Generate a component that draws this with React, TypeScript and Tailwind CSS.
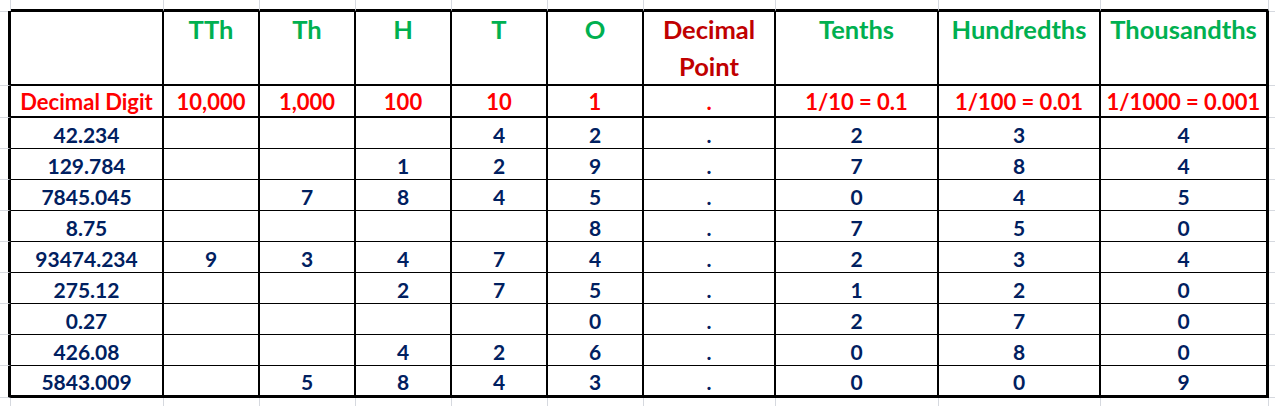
import React from 'react';

// place value chart, laid out like the spreadsheet it came from
const headers = ['TTh', 'Th', 'H', 'T', 'O'];
const values = ['10,000', '1,000', '100', '10', '1'];
const fractions = ['Tenths', 'Hundredths', 'Thousandths'];
const fractionValues = ['1/10 = 0.1', '1/100 = 0.01', '1/1000 = 0.001'];

const rows: string[][] = [
  ['42.234', '', '', '', '4', '2', '.', '2', '3', '4'],
  ['129.784', '', '', '1', '2', '9', '.', '7', '8', '4'],
  ['7845.045', '', '7', '8', '4', '5', '.', '0', '4', '5'],
  ['8.75', '', '', '', '', '8', '.', '7', '5', '0'],
  ['93474.234', '9', '3', '4', '7', '4', '.', '2', '3', '4'],
  ['275.12', '', '', '2', '7', '5', '.', '1', '2', '0'],
  ['0.27', '', '', '', '', '0', '.', '2', '7', '0'],
  ['426.08', '', '', '4', '2', '6', '.', '0', '8', '0'],
  ['5843.009', '', '5', '8', '4', '3', '.', '0', '0', '9'],
];

const ROWS = 13;
const COLS = 12;

function borders(r: number, c: number) {
  const inTable = r >= 1 && r <= 11 && c >= 1 && c <= 10;
  if (inTable) {
    const right = c === 10 ? 'border-r-[3px]' : 'border-r-2';
    const bottom = r <= 2 ? 'border-b-2' : r === 11 ? 'border-b-[3px]' : 'border-b';
    return `${right} ${bottom} border-black`;
  }
  const parts: string[] = [];
  if (r === 0) {
    parts.push(c >= 1 && c <= 10 ? 'border-b-[3px] border-b-black' : 'border-b border-b-[#d6d9df]');
    if (c < 11) parts.push('border-r border-r-[#d6d9df]');
  } else if (c === 0) {
    parts.push(r <= 11 ? 'border-r-[3px] border-r-black' : 'border-r border-r-[#d6d9df]');
    if (r < 12) parts.push('border-b border-b-[#d6d9df]');
  } else if (c === 11) {
    if (r < 12) parts.push('border-b border-b-[#d6d9df]');
  } else if (r === 12) {
    parts.push('border-r border-r-[#d6d9df]');
  }
  return parts.join(' ');
}

function content(r: number, c: number): React.ReactNode {
  if (r === 1) {
    if (c >= 2 && c <= 6)
      return <span className="text-[25.5px] leading-[37px] text-[#00b050]">{headers[c - 2]}</span>;
    if (c === 7)
      return (
        <span className="text-[25.5px] leading-[37px] text-[#c00000]">
          Decimal
          <br />
          Point
        </span>
      );
    if (c >= 8 && c <= 10)
      return <span className="text-[25.5px] leading-[37px] text-[#00b050]">{fractions[c - 8]}</span>;
    return null;
  }
  if (r === 2) {
    let text = '';
    if (c === 1) text = 'Decimal Digit';
    else if (c >= 2 && c <= 6) text = values[c - 2];
    else if (c === 7) text = '.';
    else if (c >= 8 && c <= 10) text = fractionValues[c - 8];
    if (!text) return null;
    return <span className="text-[22px] leading-none text-[#ff0000]">{text}</span>;
  }
  if (r >= 3 && r <= 11 && c >= 1 && c <= 10) {
    const text = rows[r - 3][c - 1];
    if (!text) return null;
    return <span className="text-[21px] leading-none text-[#002060]">{text}</span>;
  }
  return null;
}

function App() {
  const cells: React.ReactNode[] = [];
  for (let r = 0; r < ROWS; r++) {
    for (let c = 0; c < COLS; c++) {
      const align = r === 1 ? 'items-start justify-center text-center -mt-[1px]' : 'items-center justify-center pt-[2px]';
      cells.push(
        <div key={`${r}-${c}`} className={`flex min-w-0 ${align} ${borders(r, c)}`}>
          {content(r, c)}
        </div>
      );
    }
  }

  return (
    <div className="h-[406px] w-[1275px] overflow-hidden bg-white font-[Lato,sans-serif] font-bold">
      <div className="grid h-full grid-cols-[11px_153px_96px_96px_96px_96px_96px_132px_163px_162px_168px_1fr] grid-rows-[12px_74px_32px_31px_31px_31px_31px_31px_31px_31px_31px_32px_1fr]">
        {cells}
      </div>
    </div>
  );
}

export default App;
